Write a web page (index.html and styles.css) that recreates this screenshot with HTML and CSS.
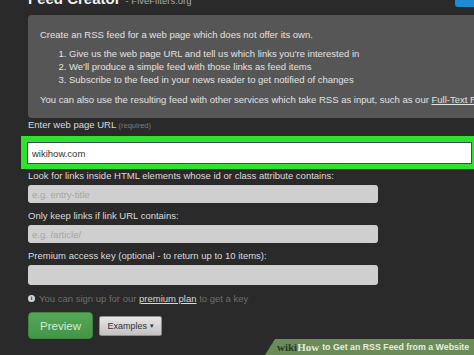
FILE: index.html
```html
<!DOCTYPE html>
<html>
<head>
<meta charset="utf-8">
<link rel="stylesheet" href="styles.css">
</head>
<body>
<div class="page">
  <header class="header">
    <h1 class="title">Feed Creator</h1>
    <span class="subtitle">- FiveFilters.org</span>
    <span class="top-btn"></span>
  </header>

  <section class="intro">
    <p class="intro-line">Create an RSS feed for a web page which does not offer its own.</p>
    <ol class="steps">
      <li>Give us the web page URL and tell us which links you're interested in</li>
      <li>We'll produce a simple feed with those links as feed items</li>
      <li>Subscribe to the feed in your news reader to get notified of changes</li>
    </ol>
    <p class="intro-line nowrap">You can also use the resulting feed with other services which take RSS as input, such as our <span class="link">Full-Text RSS</span> service.</p>
  </section>

  <form class="form">
    <label class="label">Enter web page URL <span class="req">(required)</span></label>
    <div class="highlight">
      <input class="url-input" type="text" value="wikihow.com">
    </div>

    <label class="label">Look for links inside HTML elements whose id or class attribute contains:</label>
    <input class="field" type="text" placeholder="e.g. entry-title">

    <label class="label gap">Only keep links if link URL contains:</label>
    <input class="field" type="text" placeholder="e.g. /article/">

    <label class="label gap">Premium access key (optional - to return up to 10 items):</label>
    <input class="field tall" type="text">

    <p class="info"><span class="info-icon">i</span>You can sign up for our <span class="info-link">premium plan</span> to get a key</p>

    <div class="actions">
      <span class="btn-preview">Preview</span>
      <span class="btn-examples">Examples <span class="caret">&#9662;</span></span>
    </div>
  </form>
</div>
<div class="wh-banner"><span class="wh-wiki">wiki</span><span class="wh-how">How</span><span class="wh-text">to Get an RSS Feed from a Website</span></div>
</body>
</html>
```
FILE: styles.css
```css
html, body {
  margin: 0;
  padding: 0;
}
body {
  width: 474px;
  height: 355px;
  overflow: hidden;
  background: #2a2a2a;
  font-family: "Liberation Sans", Arial, sans-serif;
  font-size: 9.5px;
  color: #dcdcdc;
  position: relative;
}
.page {
  padding-left: 28px;
}
.header {
  display: flex;
  align-items: baseline;
  height: 18px;
  margin-top: -10px;
}
.title {
  margin: 0;
  font-size: 15px;
  line-height: 18px;
  font-weight: bold;
  color: #f2f2f2;
}
.subtitle {
  margin-left: 5px;
  font-size: 9.5px;
  color: #a8a8a8;
}
.top-btn {
  align-self: flex-start;
  margin-left: auto;
  margin-right: -12px;
  flex-shrink: 0;
  width: 31px;
  height: 17px;
  border-radius: 3px;
  background: #1f8bd2;
}
.intro {
  margin-top: 7px;
  margin-right: -12px;
  background: #565656;
  border-radius: 4px;
  padding: 13px 12px 12px 12px;
  overflow: hidden;
  line-height: 13px;
  color: #e2e2e2;
}
.intro-line {
  margin: 0;
}
.nowrap {
  white-space: nowrap;
  margin-top: 7px;
}
.steps {
  margin: 6px 0 0 0;
  padding-left: 29px;
}
.link {
  text-decoration: underline;
}
.form {
  display: flex;
  flex-direction: column;
  align-items: flex-start;
  margin: 0;
}
.label {
  display: block;
  line-height: 13px;
  color: #dadada;
}
.label.gap {
  margin-top: 6px;
}
.req {
  font-size: 7.5px;
  color: #7a7a7a;
}
.highlight {
  align-self: stretch;
  margin: 4px -4px 0 -7px;
  border: 6px solid #2ee22e;
  border-bottom-width: 5px;
  background: #2ee22e;
}
.url-input {
  display: block;
  box-sizing: border-box;
  width: 100%;
  height: 22px;
  margin: 0;
  padding: 0 4px;
  border: 1px solid #3a4a5c;
  background: #ffffff;
  font-family: "Liberation Sans", Arial, sans-serif;
  font-size: 9.5px;
  color: #333;
  outline: none;
}
.field {
  display: block;
  box-sizing: border-box;
  width: 350px;
  height: 18px;
  margin: 3px 0 0 0;
  padding: 0 4px;
  border: none;
  border-radius: 3px;
  background: #cfcfcf;
  font-family: "Liberation Sans", Arial, sans-serif;
  font-size: 9.5px;
  color: #333;
  outline: none;
}
.field::placeholder {
  color: #a6a6a6;
}
.field.tall {
  height: 20px;
}
.info {
  margin: 7px 0 0 0;
  line-height: 13px;
  color: #6e6e6e;
  display: flex;
  align-items: center;
  white-space: pre;
}
.info-icon {
  display: inline-flex;
  align-items: center;
  justify-content: center;
  width: 7px;
  height: 7px;
  border-radius: 50%;
  background: #d6d6d6;
  color: #2a2a2a;
  font-size: 6px;
  font-weight: bold;
  margin-right: 4px;
}
.info-link {
  color: #d8d8d8;
  text-decoration: underline;
}
.actions {
  display: flex;
  align-items: center;
  gap: 6px;
  margin-top: 7px;
}
.btn-preview {
  box-sizing: border-box;
  width: 65px;
  height: 27px;
  display: flex;
  align-items: center;
  justify-content: center;
  border-radius: 4px;
  border: 1px solid #3f8340;
  background: linear-gradient(#56a757, #44944a);
  color: #d4ecd2;
  font-size: 11.5px;
}
.btn-examples {
  box-sizing: border-box;
  width: 63px;
  height: 20px;
  display: flex;
  align-items: center;
  justify-content: center;
  border-radius: 2px;
  border: 1px solid #8e8e8e;
  background: linear-gradient(#e6e6e6, #c2c2c2);
  color: #333;
  font-size: 9px;
  white-space: pre;
}
.caret {
  font-size: 7px;
}
.wh-banner {
  position: absolute;
  right: 0;
  bottom: 0;
  width: 209px;
  height: 16px;
  background: #6b8c58;
  clip-path: polygon(10px 0, 100% 0, 100% 100%, 0 100%);
  box-sizing: border-box;
  padding-left: 12px;
  display: flex;
  align-items: center;
  white-space: pre;
}
.wh-wiki {
  font-family: "Liberation Serif", "Times New Roman", serif;
  font-weight: bold;
  font-size: 11px;
  color: #2c3824;
}
.wh-how {
  font-family: "Liberation Serif", "Times New Roman", serif;
  font-weight: bold;
  font-size: 11px;
  color: #e3ead9;
  margin-right: 3px;
}
.wh-text {
  font-weight: bold;
  font-size: 8.8px;
  color: #e6ece0;
}
```
